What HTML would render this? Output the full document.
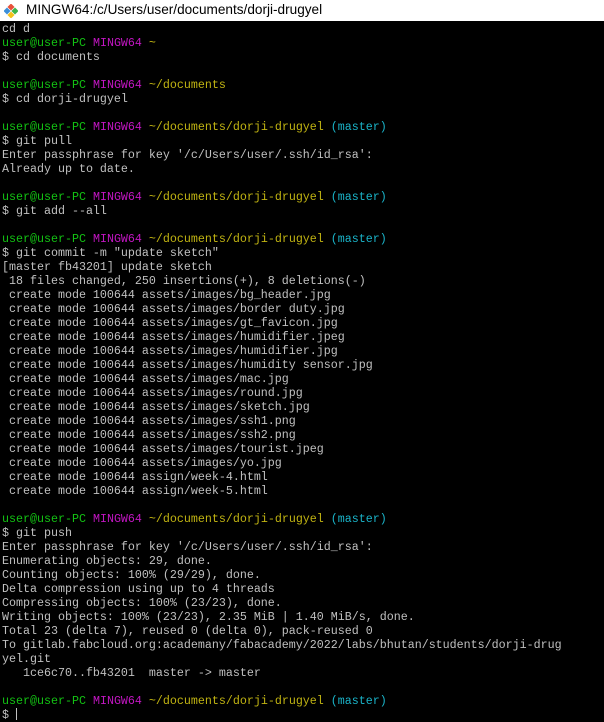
<!DOCTYPE html>
<html><head><meta charset="utf-8"><style>
html,body{margin:0;padding:0;background:#000;width:604px;height:717px;overflow:hidden}
.t{position:absolute;left:0;top:0;width:604px;height:21px;background:#fff;font:13.6px "Liberation Sans",sans-serif;color:#000}
.t span{position:absolute;left:26px;top:2px}
.ic{position:absolute;left:4px;top:4px;width:14px;height:14px}
pre{position:absolute;left:2px;top:22px;margin:0;font:11.67px/14px "Liberation Mono",monospace;color:#c0c0c0}
.g{color:#13c313}.m{color:#c316c3}.y{color:#c1b412}.c{color:#1ab4c9}
.cur{display:inline-block;width:1px;height:12px;background:#c0c0c0;vertical-align:-2px}
</style></head><body>
<div class="t"><svg class="ic" viewBox="0 0 14 14">
<rect x="4.5" y="0.5" width="5" height="5" fill="#e8513a" transform="rotate(45 7 3)"/>
<rect x="0.5" y="4.5" width="5" height="5" fill="#3d8fd9" transform="rotate(45 3 7)"/>
<rect x="8.5" y="4.5" width="5" height="5" fill="#3cb54a" transform="rotate(45 11 7)"/>
<rect x="4.5" y="8.5" width="5" height="5" fill="#f4c21b" transform="rotate(45 7 11)"/>
</svg><span>MINGW64:/c/Users/user/documents/dorji-drugyel</span></div>
<pre>cd d
<span class="g">user@user-PC</span> <span class="m">MINGW64</span> <span class="y">~</span>
$ cd documents

<span class="g">user@user-PC</span> <span class="m">MINGW64</span> <span class="y">~/documents</span>
$ cd dorji-drugyel

<span class="g">user@user-PC</span> <span class="m">MINGW64</span> <span class="y">~/documents/dorji-drugyel</span> <span class="c">(master)</span>
$ git pull
Enter passphrase for key '/c/Users/user/.ssh/id_rsa':
Already up to date.

<span class="g">user@user-PC</span> <span class="m">MINGW64</span> <span class="y">~/documents/dorji-drugyel</span> <span class="c">(master)</span>
$ git add --all

<span class="g">user@user-PC</span> <span class="m">MINGW64</span> <span class="y">~/documents/dorji-drugyel</span> <span class="c">(master)</span>
$ git commit -m "update sketch"
[master fb43201] update sketch
 18 files changed, 250 insertions(+), 8 deletions(-)
 create mode 100644 assets/images/bg_header.jpg
 create mode 100644 assets/images/border duty.jpg
 create mode 100644 assets/images/gt_favicon.jpg
 create mode 100644 assets/images/humidifier.jpeg
 create mode 100644 assets/images/humidifier.jpg
 create mode 100644 assets/images/humidity sensor.jpg
 create mode 100644 assets/images/mac.jpg
 create mode 100644 assets/images/round.jpg
 create mode 100644 assets/images/sketch.jpg
 create mode 100644 assets/images/ssh1.png
 create mode 100644 assets/images/ssh2.png
 create mode 100644 assets/images/tourist.jpeg
 create mode 100644 assets/images/yo.jpg
 create mode 100644 assign/week-4.html
 create mode 100644 assign/week-5.html

<span class="g">user@user-PC</span> <span class="m">MINGW64</span> <span class="y">~/documents/dorji-drugyel</span> <span class="c">(master)</span>
$ git push
Enter passphrase for key '/c/Users/user/.ssh/id_rsa':
Enumerating objects: 29, done.
Counting objects: 100% (29/29), done.
Delta compression using up to 4 threads
Compressing objects: 100% (23/23), done.
Writing objects: 100% (23/23), 2.35 MiB | 1.40 MiB/s, done.
Total 23 (delta 7), reused 0 (delta 0), pack-reused 0
To gitlab.fabcloud.org:academany/fabacademy/2022/labs/bhutan/students/dorji-drug
yel.git
   1ce6c70..fb43201  master -&gt; master

<span class="g">user@user-PC</span> <span class="m">MINGW64</span> <span class="y">~/documents/dorji-drugyel</span> <span class="c">(master)</span>
$ <span class="cur"></span></pre>
</body></html>
